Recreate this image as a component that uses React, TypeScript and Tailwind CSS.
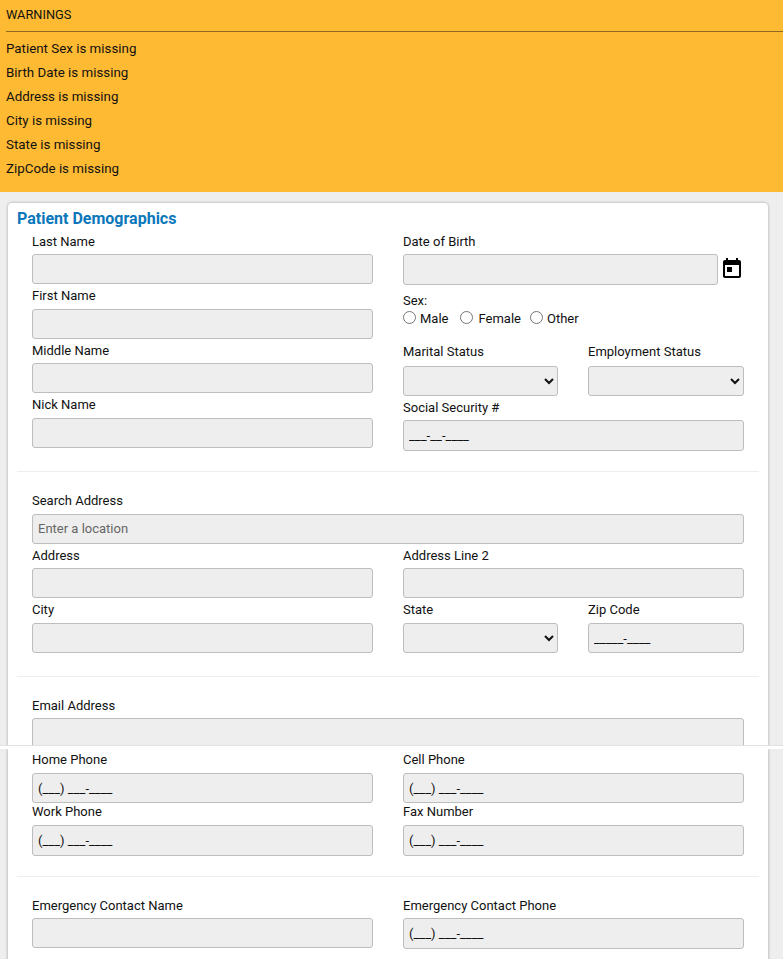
import React from "react";

const inputBase =
  "block min-w-0 rounded-[3px] border border-[#bdbdbd] bg-[#eeeeee] px-[5px] text-[13px] text-[#111111] outline-none placeholder:text-[#666666]";

function Label({ text, mb }: { text: string; mb: string }) {
  return <label className={`block pt-px text-[13px] leading-[18px] text-[#111111] ${mb}`}>{text}</label>;
}

function Field({
  label,
  value,
  placeholder,
  mb = "mb-[3px]",
  h = "h-[30px]",
  after = "mb-[2px]",
  extra = "",
}: {
  label: string;
  value?: string;
  placeholder?: string;
  mb?: string;
  h?: string;
  after?: string;
  extra?: string;
}) {
  return (
    <div className={after}>
      <Label text={label} mb={mb} />
      <input readOnly value={value ?? ""} placeholder={placeholder} className={`${inputBase} w-full ${h} ${extra}`} />
    </div>
  );
}

function SelectField({ label, mb = "mb-1", after = "" }: { label: string; mb?: string; after?: string }) {
  return (
    <div className={after}>
      <Label text={label} mb={mb} />
      <select className="block h-[30px] w-full rounded-[3px] border border-[#bdbdbd] bg-[#eeeeee] text-[13px] text-[#111111] outline-none">
        <option></option>
      </select>
    </div>
  );
}

function Radio({ label, gap, textGap = "ml-1" }: { label: string; gap: string; textGap?: string }) {
  return (
    <label className={`flex items-center ${gap}`}>
      <input type="radio" name="sex" className="m-0 h-[13px] w-[13px] -translate-y-[2px]" />
      <span className={`${textGap} text-[13px] leading-[18px] text-[#111111]`}>{label}</span>
    </label>
  );
}

function CalendarIcon() {
  return (
    <svg viewBox="0 0 24 24" className="mt-[3px] ml-[2px] h-6 w-6 shrink-0" fill="#000000">
      <path d="M19 3h-1V1h-2v2H8V1H6v2H5c-1.11 0-1.99.9-1.99 2L3 19c0 1.1.89 2 2 2h14c1.1 0 2-.9 2-2V5c0-1.1-.9-2-2-2zm0 16H5V8h14v11zM7 10h5v5H7z" />
    </svg>
  );
}

const warnings = [
  "Patient Sex is missing",
  "Birth Date is missing",
  "Address is missing",
  "City is missing",
  "State is missing",
  "ZipCode is missing",
];

const PHONE = "(___) ___-____";

export default function App() {
  return (
    <div className="h-[959px] overflow-hidden bg-[#eeeeee] font-['Roboto',sans-serif]">
      <div className="h-[192px] bg-[#ffba33] text-[#111111]">
        <div className="flex h-[31px] items-center pb-[2px] pl-[6px] text-[12.8px] uppercase">Warnings</div>
        <div className="ml-[6px] h-px bg-[#8c6a1f]" />
        <ul className="pt-[5px] pl-[6px]">
          {warnings.map((w) => (
            <li key={w} className="h-6 text-[13.33px] leading-6">
              {w}
            </li>
          ))}
        </ul>
      </div>

      {/* upper part of the card */}
      <div className="h-[553px] overflow-hidden pt-[11px] pr-[15px] pl-2">
        <div className="h-[600px] rounded-[4px] bg-white px-[9px] shadow-[0_0_3px_rgba(0,0,0,0.35)]">
          <h2 className="h-[29px] pt-[6px] pb-0 text-[16px] leading-[19px] font-bold text-[#0a77bb]">
            Patient Demographics
          </h2>

          <div className="grid grid-cols-2 gap-x-[30px] px-[15px]">
            <div>
              <Field label="Last Name" />
              <Field label="First Name" mb="mb-1" />
              <Field label="Middle Name" />
              <Field label="Nick Name" mb="mb-1" after="" />
            </div>
            <div>
              <Label text="Date of Birth" mb="mb-[3px]" />
              <div className="flex items-start">
                <input readOnly className={`${inputBase} h-[31px] w-[315px] flex-none`} />
                <CalendarIcon />
              </div>
              <div className="mt-[6px] pt-px text-[13px] leading-[18px] text-[#111111]">Sex:</div>
              <div className="flex items-center">
                <Radio label="Male" gap="mr-3" />
                <Radio label="Female" gap="mr-[9px]" textGap="ml-[5px]" />
                <Radio label="Other" gap="" />
              </div>
              <div className="mt-[14px] grid grid-cols-[155px_156px] gap-x-[30px]">
                <SelectField label="Marital Status" mb="mb-[5px]" />
                <SelectField label="Employment Status" mb="mb-[5px]" />
              </div>
              <div className="mt-[2px]">
                <Field label="Social Security #" value="___-__-____" h="h-[31px]" after="" />
              </div>
            </div>
          </div>

          <hr className="mt-[20px] border-0 border-t border-[#eeeeee]" />

          <div className="mt-[19px] px-[15px]">
            <Field label="Search Address" placeholder="Enter a location" mb="mb-1" extra="pb-[2px]" />
            <div className="grid grid-cols-2 gap-x-[30px]">
              <Field label="Address" />
              <Field label="Address Line 2" />
              <Field label="City" mb="mb-1" after="" />
              <div className="grid grid-cols-[155px_156px] gap-x-[30px]">
                <SelectField label="State" />
                <Field label="Zip Code" value="_____-____" mb="mb-1" after="" />
              </div>
            </div>
          </div>

          <hr className="mt-[23px] border-0 border-t border-[#eeeeee]" />

          <div className="mt-[19px] px-[15px]">
            <Field label="Email Address" after="" />
          </div>
        </div>
      </div>

      {/* seam */}
      <div className="h-[4px] border-t border-[#e2e2e2] bg-white" />

      {/* lower part of the card */}
      <div className="h-[210px] overflow-hidden pr-[15px] pl-2">
        <div className="h-[230px] bg-white px-[9px] pt-px shadow-[0_0_3px_rgba(0,0,0,0.35)]">
          <div className="grid grid-cols-2 gap-x-[30px] px-[15px]">
            <Field label="Home Phone" value={PHONE} mb="mb-1" after="mb-[-1px]" />
            <Field label="Cell Phone" value={PHONE} mb="mb-1" after="mb-[-1px]" />
            <Field label="Work Phone" value={PHONE} mb="mb-1" h="h-[31px]" after="" />
            <Field label="Fax Number" value={PHONE} mb="mb-1" h="h-[31px]" after="" />
          </div>

          <hr className="mt-[20px] border-0 border-t border-[#eeeeee]" />

          <div className="mt-[19px] grid grid-cols-2 gap-x-[30px] px-[15px]">
            <Field label="Emergency Contact Name" after="" />
            <Field label="Emergency Contact Phone" value={PHONE} h="h-[31px]" after="" />
          </div>
        </div>
      </div>
    </div>
  );
}
